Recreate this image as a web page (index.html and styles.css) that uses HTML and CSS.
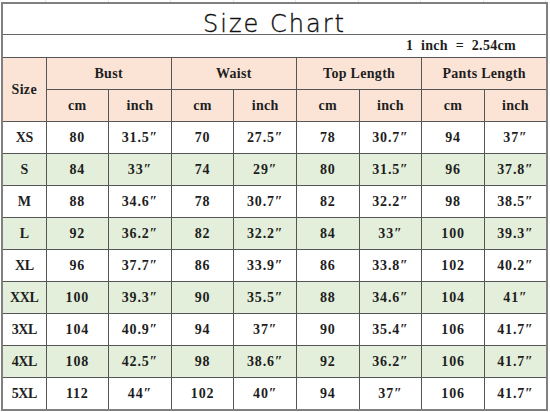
FILE: index.html
```html
<!DOCTYPE html>
<html lang="en">
<head>
<meta charset="utf-8">
<title>Size Chart</title>
<link rel="stylesheet" href="styles.css">
</head>
<body>
<div class="sheet">
  <div class="gridlines">
    <span class="g-size"></span><span></span><span></span><span></span><span></span><span></span><span></span><span></span><span></span>
  </div>
  <table class="chart">
    <colgroup>
      <col class="c-size">
      <col><col><col><col><col><col><col><col>
    </colgroup>
    <tr class="title-row"><td colspan="9" class="title">Size Chart</td></tr>
    <tr class="note-row"><td colspan="9" class="note">1 inch = 2.54cm</td></tr>
    <tr class="head">
      <th rowspan="2">Size</th>
      <th colspan="2">Bust</th>
      <th colspan="2">Waist</th>
      <th colspan="2">Top Length</th>
      <th colspan="2">Pants Length</th>
    </tr>
    <tr class="head">
      <th>cm</th><th>inch</th><th>cm</th><th>inch</th><th>cm</th><th>inch</th><th>cm</th><th>inch</th>
    </tr>
    <tr><td class="size">XS</td><td>80</td><td>31.5″</td><td>70</td><td>27.5″</td><td>78</td><td>30.7″</td><td>94</td><td>37″</td></tr>
    <tr class="alt"><td class="size">S</td><td>84</td><td>33″</td><td>74</td><td>29″</td><td>80</td><td>31.5″</td><td>96</td><td>37.8″</td></tr>
    <tr><td class="size">M</td><td>88</td><td>34.6″</td><td>78</td><td>30.7″</td><td>82</td><td>32.2″</td><td>98</td><td>38.5″</td></tr>
    <tr class="alt"><td class="size">L</td><td>92</td><td>36.2″</td><td>82</td><td>32.2″</td><td>84</td><td>33″</td><td>100</td><td>39.3″</td></tr>
    <tr><td class="size">XL</td><td>96</td><td>37.7″</td><td>86</td><td>33.9″</td><td>86</td><td>33.8″</td><td>102</td><td>40.2″</td></tr>
    <tr class="alt"><td class="size">XXL</td><td>100</td><td>39.3″</td><td>90</td><td>35.5″</td><td>88</td><td>34.6″</td><td>104</td><td>41″</td></tr>
    <tr><td class="size">3XL</td><td>104</td><td>40.9″</td><td>94</td><td>37″</td><td>90</td><td>35.4″</td><td>106</td><td>41.7″</td></tr>
    <tr class="alt"><td class="size">4XL</td><td>108</td><td>42.5″</td><td>98</td><td>38.6″</td><td>92</td><td>36.2″</td><td>106</td><td>41.7″</td></tr>
    <tr><td class="size">5XL</td><td>112</td><td>44″</td><td>102</td><td>40″</td><td>94</td><td>37″</td><td>106</td><td>41.7″</td></tr>
  </table>
</div>
</body>
</html>
```

FILE: styles.css
```css
html, body {
  margin: 0;
  padding: 0;
  background: #ffffff;
}

.sheet {
  padding-left: 1px;
  width: 548px;
}

.gridlines {
  display: flex;
  height: 2px;
}

.gridlines span {
  flex: 0 0 62.5px;
  box-sizing: border-box;
  border-right: 1px solid #e4e4e4;
}

.gridlines .g-size {
  flex-basis: 45px;
}

.chart {
  border-collapse: collapse;
  table-layout: fixed;
  width: 547px;
  border: 2px solid #808080;
  font-family: "Liberation Serif", "Times New Roman", serif;
  font-weight: bold;
  font-size: 14px;
  color: #1e1e1e;
}

.c-size {
  width: 44px;
}

.chart td,
.chart th {
  border: 1px solid #555555;
  text-align: center;
  padding: 0;
  height: 31px;
  letter-spacing: 0.8px;
}

.chart td.size {
  letter-spacing: -0.4px;
}

.chart th {
  font-weight: bold;
  letter-spacing: 0.3px;
}

.head th {
  background: #fbe4d6;
}

.alt td {
  background: #e3efda;
}

.title-row td.title {
  height: 30px;
  border-left: 2px solid #808080;
  border-right: 2px solid #808080;
  border-bottom: 1px solid #666666;
  font-family: "DejaVu Sans", sans-serif;
  font-weight: 200;
  font-size: 24px;
  line-height: 20px;
  letter-spacing: 2px;
  -webkit-text-stroke: 0.35px #111111;
  color: #111111;
  vertical-align: bottom;
  padding-bottom: 0;
}

.note-row td.note {
  height: 22px;
  text-align: right;
  padding-right: 30px;
  font-size: 14px;
  word-spacing: 4px;
  letter-spacing: 0.3px;
}
```
